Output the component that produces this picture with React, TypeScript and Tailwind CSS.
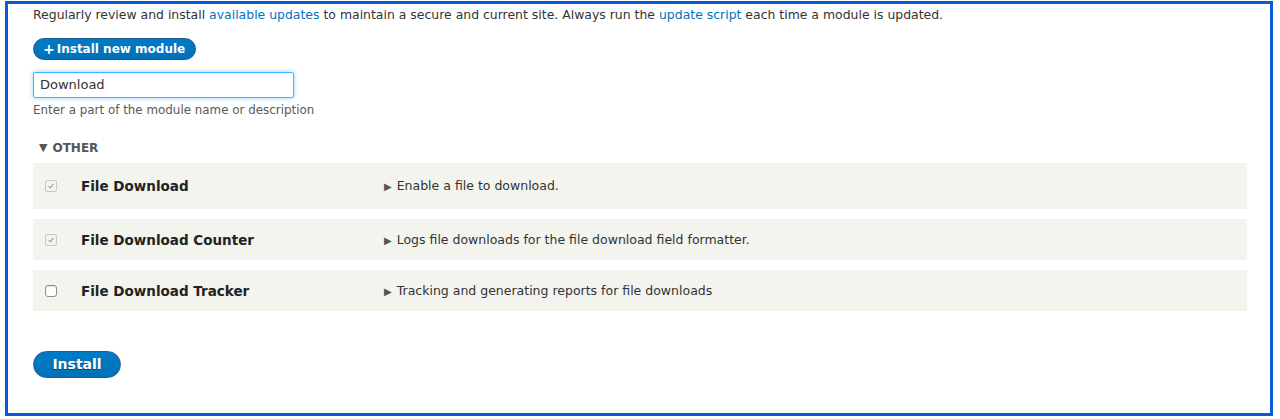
import React from "react";

const modules = [
  { name: "File Download", desc: "Enable a file to download.", locked: true, h: "h-[46px]" },
  { name: "File Download Counter", desc: "Logs file downloads for the file download field formatter.", locked: true, h: "h-[41px]" },
  { name: "File Download Tracker", desc: "Tracking and generating reports for file downloads", locked: false, h: "h-[41px]" },
];

const CheckBox = ({ locked }: { locked: boolean }) =>
  locked ? (
    <span className="flex h-[12px] w-[12px] items-center justify-center rounded-[2px] border border-[#c8c8c8] bg-[#f2f2f2]">
      <svg viewBox="0 0 10 10" className="h-[8px] w-[8px]" fill="none" stroke="#9a9a9a" strokeWidth="1.3">
        <path d="M2 5.2l2 2 4-4.6" />
      </svg>
    </span>
  ) : (
    <span className="block h-[12px] w-[12px] rounded-[3px] border border-[#8f8f8f] bg-white shadow-[inset_0_1px_1px_rgba(0,0,0,0.12)]" />
  );

export default function App() {
  return (
    <div className="h-[419px] w-[1280px] bg-white pt-px pl-[5px] font-['DejaVu_Sans',sans-serif] text-[#222]">
      <div className="h-[415px] w-[1268px] border-[3px] border-[#0b5bd5] pl-[25px] pr-[23px]">
        <p className="pt-px text-[12.45px] leading-[20px] text-[#333]">
          Regularly review and install{" "}
          <a className="text-[#0074bd]">available updates</a> to maintain a secure and current site. Always run the{" "}
          <a className="text-[#0074bd]">update script</a> each time a module is updated.
        </p>

        <button className="mt-[13px] flex h-[22px] items-center rounded-full border border-[#1e5c90] bg-gradient-to-b from-[#007bc6] to-[#0071b8] pl-[9px] pr-[10px] text-[12px] font-bold text-white">
          <span className="mr-[2px] text-[14px] leading-none">+</span>Install new module
        </button>

        <div className="mt-[12px] flex h-[26px] w-[261px] items-center rounded-[2px] border border-[#40b6ff] px-[6px] text-[13px] text-[#333] shadow-[0_0_5px_rgba(64,182,255,0.6)]">
          Download
        </div>
        <div className="mt-[4px] text-[11.9px] leading-[16px] text-[#595959]">
          Enter a part of the module name or description
        </div>

        <div className="mt-[22px] flex items-center pl-[6px] text-[12px] font-bold leading-[16px] text-[#555]">
          <span className="mr-[5px] text-[11px]">▼</span>OTHER
        </div>

        <div className="mt-[7px] flex flex-col gap-[10px]">
          {modules.map((m) => (
            <div key={m.name} className={`flex items-center bg-[#f3f4ee] ${m.h}`}>
              <div className="w-[48px] pl-[12px]">
                <CheckBox locked={m.locked} />
              </div>
              <div className="w-[303px] pt-px text-[13.5px] font-bold text-[#222]">{m.name}</div>
              <div className="flex items-center pt-px text-[12.5px] text-[#333]">
                <span className="mr-[5px] text-[10px] text-[#555]">▶</span>
                {m.desc}
              </div>
            </div>
          ))}
        </div>

        <button className="mt-[40px] flex h-[27px] w-[88px] items-center justify-center rounded-full border border-[#1e5c90] bg-gradient-to-b from-[#007bc6] to-[#0071b8] text-[14px] font-bold text-white [text-shadow:0_1px_1px_rgba(0,0,0,0.4)]">
          Install
        </button>
      </div>
    </div>
  );
}
